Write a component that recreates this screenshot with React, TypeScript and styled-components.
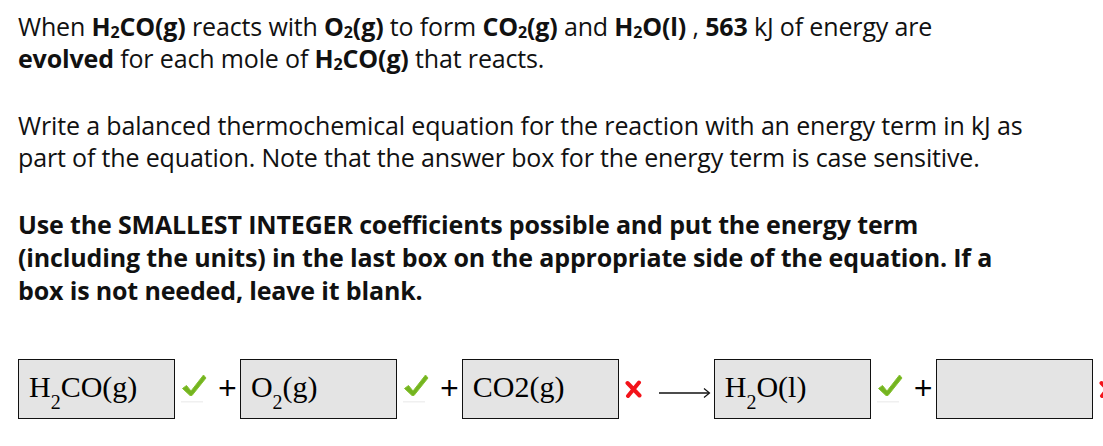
import React from 'react'
import styled, { createGlobalStyle } from 'styled-components'

const GlobalStyle = createGlobalStyle`
  html, body {
    margin: 0;
    padding: 0;
    background: #fff;
  }
  body {
    font-family: "Open Sans", "Liberation Sans", sans-serif;
    color: #111;
  }
`

const Page = styled.div`
  padding: 10px 18px 0 18px;
`

const Para = styled.p<{ $bold?: boolean }>`
  margin: 0 0 35px 0;
  font-size: 25px;
  line-height: 32px;
  font-weight: ${p => (p.$bold ? 700 : 400)};
  letter-spacing: -0.15px;
`

const BoldPara = styled(Para)`
  line-height: 33px;
  margin-bottom: 52px;
`

const Sub = styled.sub`
  font-size: 16px;
  line-height: 0;
  vertical-align: -2px;
`

const EquationRow = styled.div`
  display: flex;
  align-items: center;
  height: 60px;
`

const AnswerBox = styled.div`
  box-sizing: border-box;
  width: 157px;
  height: 60px;
  flex: none;
  background: #e4e4e4;
  border: 1px solid #111;
  font-family: "Liberation Serif", "Times New Roman", serif;
  font-size: 30px;
  color: #000;
  padding: 12px 0 0 10px;
  line-height: 30px;
  white-space: nowrap;
`

const BoxSub = styled.span`
  font-size: 20px;
  position: relative;
  top: 12px;
`

const Plus = styled.span`
  font-family: "Open Sans", sans-serif;
  font-size: 33px;
  line-height: 1;
  color: #000;
  margin: 0 3px 4px 0;
`

const Mark = styled.span<{ $left: number; $right: number }>`
  display: flex;
  margin: 0 ${p => p.$right}px 0 ${p => p.$left}px;
  flex: none;
`

const Check = () => (
  <Mark $left={6} $right={11}>
    <svg width="26" height="32" viewBox="0 0 26 32">
      <path
        d="M1.5 15.5 L5.5 12.5 L10 18 L22.5 2 L25 5 L11 22.5 L9 22.5 Z"
        fill="#74b420"
        stroke="#86c230"
        strokeWidth="1"
        strokeLinejoin="round"
      />
      <rect x="0" y="28" width="22" height="1.5" fill="#f0f0f0" />
    </svg>
  </Mark>
)

const Cross = ({ right }: { right: number }) => (
  <Mark $left={6} $right={right}>
    <svg width="17" height="18" viewBox="0 0 17 18">
      <path
        d="M2.5 3 L14.5 15.5 M14 2.5 L3 16"
        stroke="#f3131a"
        strokeWidth="4"
        strokeLinecap="round"
      />
    </svg>
  </Mark>
)

const Arrow = () => (
  <Mark $left={0} $right={3}>
    <svg width="52" height="14" viewBox="0 0 52 14" style={{ marginTop: 8 }}>
      <line x1="0" y1="7" x2="50" y2="7" stroke="#111" strokeWidth="1.3" />
      <path d="M45 2.5 L50.5 7 L45 11.5" fill="none" stroke="#111" strokeWidth="1.2" />
    </svg>
  </Mark>
)

export default function App() {
  return (
    <>
      <GlobalStyle />
      <Page>
        <Para>
          When <b>H<Sub>2</Sub>CO(g)</b> reacts with <b>O<Sub>2</Sub>(g)</b> to form{' '}
          <b>CO<Sub>2</Sub>(g)</b> and <b>H<Sub>2</Sub>O(l)</b> , <b>563</b> kJ of energy are
          <br />
          <b>evolved</b> for each mole of <b>H<Sub>2</Sub>CO(g)</b> that reacts.
        </Para>
        <Para>
          Write a balanced thermochemical equation for the reaction with an energy term in kJ as
          <br />
          part of the equation. Note that the answer box for the energy term is case sensitive.
        </Para>
        <BoldPara $bold>
          Use the SMALLEST INTEGER coefficients possible and put the energy term
          <br />
          (including the units) in the last box on the appropriate side of the equation. If a
          <br />
          box is not needed, leave it blank.
        </BoldPara>
        <EquationRow>
          <AnswerBox>
            H<BoxSub>2</BoxSub>CO(g)
          </AnswerBox>
          <Check />
          <Plus>+</Plus>
          <AnswerBox>
            O<BoxSub>2</BoxSub>(g)
          </AnswerBox>
          <Check />
          <Plus>+</Plus>
          <AnswerBox>CO2(g)</AnswerBox>
          <Cross right={17} />
          <Arrow />
          <AnswerBox>
            H<BoxSub>2</BoxSub>O(l)
          </AnswerBox>
          <Check />
          <Plus>+</Plus>
          <AnswerBox />
          <Cross right={0} />
        </EquationRow>
      </Page>
    </>
  )
}
